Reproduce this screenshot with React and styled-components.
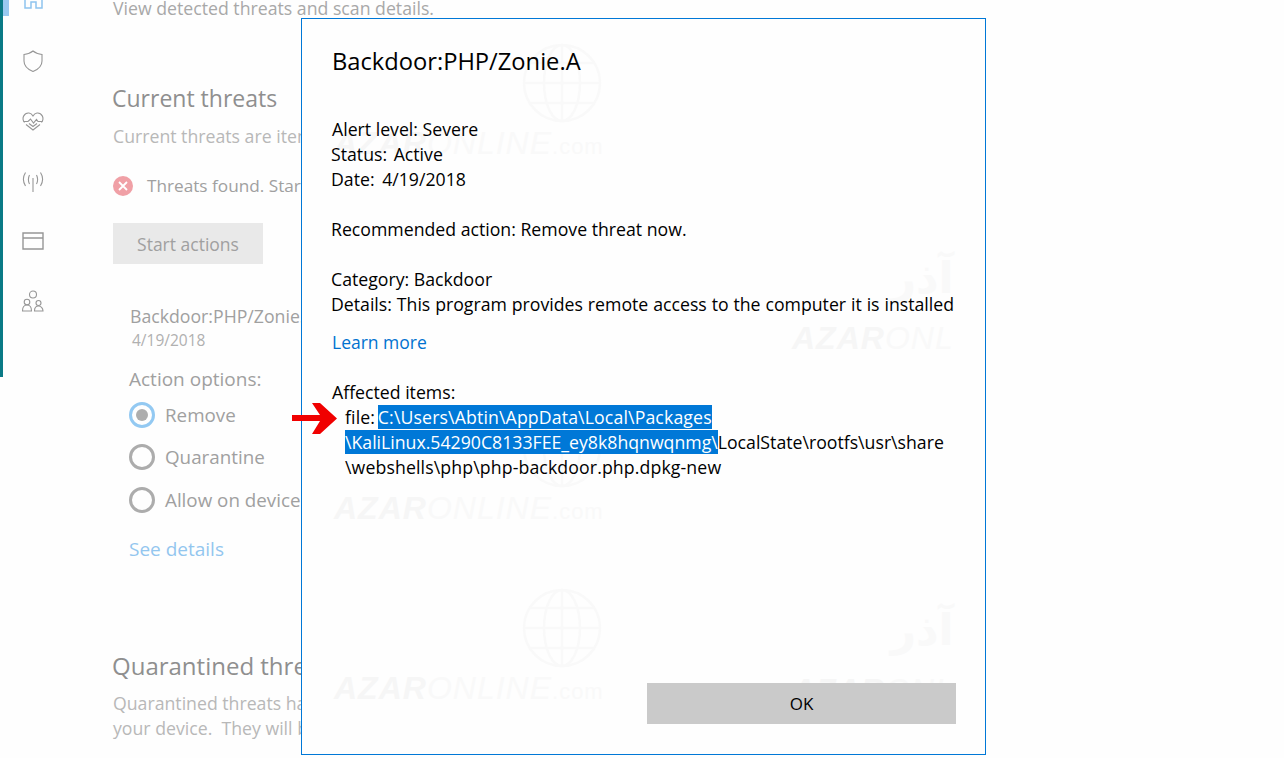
import React from "react";
import styled, { createGlobalStyle } from "styled-components";

const Global = createGlobalStyle`
  html, body {
    margin: 0;
    padding: 0;
    height: 100%;
    background: #fefefe;
    overflow: hidden;
  }
  body {
    font-family: "Open Sans", "Noto Sans", "Liberation Sans", sans-serif;
  }
`;

const Page = styled.div`
  display: flex;
  width: 1284px;
  height: 758px;
  overflow: hidden;
  position: relative;
`;

const Rail = styled.div`
  width: 3px;
  height: 377px;
  background: #0a7a86;
  flex: none;
`;

const Sidebar = styled.nav`
  width: 60px;
  flex: none;
  display: flex;
  flex-direction: column;
  align-items: center;
  position: relative;
  padding-top: 49px;
  margin-right: 50px;
  gap: 36px;
`;

const Selected = styled.div`
  position: absolute;
  left: 0;
  top: 0;
  width: 6px;
  height: 16px;
  background: #99c9f0;
`;

const HomeIcon = styled.svg`
  position: absolute;
  left: 20px;
  top: -8px;
`;

const Content = styled.main`
  flex: 1;
  min-width: 0;
`;

const Intro = styled.p`
  margin: -4px 0 0;
  font-size: 17.7px;
  line-height: 24px;
  color: #a8a8a8;
  white-space: nowrap;
`;

const SectionTitle = styled.h2`
  margin: ${(p) => p.$top}px 0 0 -1px;
  font-size: ${(p) => p.$size || 23}px;
  line-height: 32px;
  font-weight: 400;
  color: #8f8f8f;
  white-space: nowrap;
`;

const Note = styled.p`
  margin: ${(p) => p.$top}px 0 0;
  font-size: 17.7px;
  line-height: 25px;
  color: #b8b8b8;
  white-space: pre;
`;

const Status = styled.div`
  display: flex;
  align-items: center;
  gap: 14px;
  margin-top: 25px;
  font-size: 17.2px;
  line-height: 24px;
  color: #a0a0a0;
  white-space: nowrap;
`;

const ErrorDot = styled.span`
  width: 20px;
  height: 20px;
  flex: none;
  border-radius: 50%;
  background: #f0a0a6;
  display: flex;
  align-items: center;
  justify-content: center;
`;

const StartButton = styled.div`
  width: 150px;
  height: 41px;
  margin-top: 25px;
  background: #e9e9e9;
  color: #a0a0a0;
  font-size: 17.5px;
  display: flex;
  align-items: center;
  justify-content: center;
`;

const ThreatBlock = styled.div`
  margin: 40px 0 0 16px;
`;

const ThreatName = styled.div`
  margin-left: 1px;
  font-size: 17.7px;
  line-height: 24px;
  color: #a0a0a0;
  white-space: nowrap;
`;

const ThreatDate = styled.div`
  margin: 1px 0 0 3px;
  font-size: 15.5px;
  line-height: 22px;
  color: #b0b0b0;
`;

const OptionsLabel = styled.div`
  margin-top: 16px;
  font-size: 19px;
  line-height: 24px;
  color: #a0a0a0;
`;

const RadioRow = styled.div`
  display: flex;
  align-items: center;
  gap: 10px;
  height: 26px;
  margin-top: ${(p) => p.$top}px;
  font-size: 18.8px;
  color: #a0a0a0;
  white-space: nowrap;
`;

const Radio = styled.span`
  width: 26px;
  height: 26px;
  box-sizing: border-box;
  flex: none;
  border-radius: 50%;
  border: 3px solid ${(p) => (p.$on ? "#93c9f2" : "#acacac")};
  display: flex;
  align-items: center;
  justify-content: center;

  &::after {
    content: "";
    display: ${(p) => (p.$on ? "block" : "none")};
    width: 12px;
    height: 12px;
    border-radius: 50%;
    background: #adadad;
  }
`;

const SeeDetails = styled.div`
  margin-top: 23px;
  font-size: 19px;
  line-height: 26px;
  color: #93c6ef;
`;

const Dialog = styled.section`
  position: absolute;
  left: 301px;
  top: 18px;
  width: 685px;
  height: 737px;
  box-sizing: border-box;
  border: 1px solid #0078d7;
  background: #fefefe;
  color: #000;
  padding: 25px 30px 0;
  font-size: 17.7px;
  line-height: 25px;
  z-index: 2;
  overflow: hidden;
`;

const DialogBody = styled.div`
  position: relative;
  z-index: 1;
`;

const Title = styled.h1`
  margin: 0;
  font-size: 23.7px;
  line-height: 34px;
  font-weight: 400;
`;

const Group = styled.div`
  margin-top: ${(p) => p.$top}px;
  white-space: nowrap;
`;

const Field = styled.div`
  margin-left: ${(p) => (p.$flush ? 0 : -1)}px;
  word-spacing: ${(p) => p.$spread || 0}px;
`;

const LearnMore = styled.div`
  margin-top: 13px;
  color: #0072d0;
  font-size: 17.5px;
`;

const FilePath = styled.div`
  padding-left: 13px;
`;

const PathLine = styled.div`
  letter-spacing: ${(p) => p.$track || 0}px;
  word-spacing: ${(p) => p.$spread || 0}px;
`;

const Highlight = styled.span`
  background: #0078d7;
  color: #fff;
`;

const OkButton = styled.div`
  position: absolute;
  left: 345px;
  top: 664px;
  width: 309px;
  height: 41px;
  background: #cacaca;
  font-size: 17px;
  display: flex;
  align-items: center;
  justify-content: center;
  z-index: 1;
`;

const Arrow = styled.svg`
  position: absolute;
  left: 291px;
  top: 401px;
  z-index: 3;
`;

/* faint site watermark behind the dialog text */
const Tile = styled.div`
  position: absolute;
  left: ${(p) => p.$x}px;
  top: ${(p) => p.$y}px;
  color: #f9f9f9;
  pointer-events: none;
`;

const TileTop = styled.div`
  display: flex;
  align-items: center;
  justify-content: flex-end;
  gap: 24px;
  height: 88px;
`;

const TileFarsi = styled.span`
  font-family: "DejaVu Sans", sans-serif;
  font-size: 44px;
  font-weight: 700;
  line-height: 60px;
`;

const TileLatin = styled.div`
  font-family: "Liberation Sans", sans-serif;
  font-size: 32px;
  font-style: italic;
  line-height: 32px;
  letter-spacing: 1px;
  white-space: nowrap;

  b {
    font-weight: 700;
    color: #f6f6f6;
  }
  small {
    font-size: 22px;
    font-style: normal;
  }
`;

const Icon = ({ children }) => (
  <svg width="24" height="24" viewBox="0 0 24 24" fill="none" stroke="#969696" strokeWidth="1.1">
    {children}
  </svg>
);

const Globe = () => (
  <svg width="84" height="84" viewBox="0 0 84 84" fill="none" stroke="#f9f9f9" strokeWidth="2.500">
    <circle cx="42" cy="42" r="38" />
    <ellipse cx="42" cy="42" rx="18" ry="38" />
    <path d="M4 42h76M10 22h64M10 62h64M42 4v76" />
  </svg>
);

const Mark = ({ x, y, farsi, tail, children }) => (
  <Tile $x={x} $y={y}>
    <TileTop>
      {farsi ? <TileFarsi>{farsi}</TileFarsi> : <Globe />}
    </TileTop>
    <TileLatin>
      <b>AZAR</b>
      {children}
      {tail && <small>{tail}</small>}
    </TileLatin>
  </Tile>
);

export default function App() {
  return (
    <Page>
      <Global />
      <Rail />
      <Sidebar>
        <Selected />
        <HomeIcon width="22" height="18" viewBox="0 0 22 18" fill="none" stroke="#8fc4ee" strokeWidth="1.5">
          <path d="M2 6v10h6v-6h5v6h6V6" />
        </HomeIcon>
        <Icon>
          <path d="M12 2c2.500 2.200 5 3 9 3.500V12c0 5-4 8.500-9 10.500C7 20.500 3 17 3 12V5.500C7 5 9.500 4.200 12 2z" />
        </Icon>
        <Icon>
          <path d="M3.500 13.500C0 9 3.500 3.500 8 4c2 .2 3 1.300 4 3 1-1.700 2-2.800 4-3 4.500-.5 8 5 4.500 9.500" />
          <path d="M2.500 12.500H7l2.500-2.500 3 4 3-3.500 1.500 2h4.500" />
          <path d="M5 15.500l7 5.500 7-5.500M8 14.500l4 3 4-3" />
        </Icon>
        <Icon>
          <path d="M12 9v14" />
          <path d="M8.500 6c-1.500 3-1.500 6 0 9M15.500 6c1.500 3 1.500 6 0 9M4.500 3.500C2 7.500 2 13 4.500 17M19.500 3.500c2.500 4 2.500 9.500 0 13.500" />
        </Icon>
        <Icon>
          <path d="M2 4h20v16H2zM2 9h20" strokeWidth="1.400" />
        </Icon>
        <Icon>
          <circle cx="12" cy="5.500" r="3.500" />
          <circle cx="6" cy="13" r="2.800" />
          <circle cx="17.500" cy="14" r="2.500" />
          <path d="M1.500 22c0-4 2-6 4.500-6s4.500 2 4.500 6zM13.500 22c0-3 1.800-5 4-5s4.500 2 4.500 5z" />
        </Icon>
      </Sidebar>
      <Content>
        <Intro>View detected threats and scan details.</Intro>
        <SectionTitle $top={62}>Current threats</SectionTitle>
        <Note $top={10}>Current threats are items that need your attention.</Note>
        <Status>
          <ErrorDot>
            <svg width="10" height="10" viewBox="0 0 10 10" stroke="#fff" strokeWidth="1.8">
              <path d="M1 1l8 8M9 1l-8 8" />
            </svg>
          </ErrorDot>
          Threats found. Start the recommended actions.
        </Status>
        <StartButton>Start actions</StartButton>
        <ThreatBlock>
          <ThreatName>Backdoor:PHP/Zonie.A</ThreatName>
          <ThreatDate>4/19/2018</ThreatDate>
          <OptionsLabel>Action options:</OptionsLabel>
          <RadioRow $top={11}>
            <Radio $on />
            Remove
          </RadioRow>
          <RadioRow $top={16}>
            <Radio />
            Quarantine
          </RadioRow>
          <RadioRow $top={17}>
            <Radio />
            Allow on device
          </RadioRow>
          <SeeDetails>See details</SeeDetails>
        </ThreatBlock>
        <SectionTitle $top={88} $size={24}>Quarantined threats</SectionTitle>
        <Note $top={9}>Quarantined threats have been isolated from</Note>
        <Note $top={0}>your device.  They will be removed automatically.</Note>
      </Content>
      <Dialog>
        <Mark x={32} y={20} tail=".com">ONLINE</Mark>
        <Mark x={32} y={385} tail=".com">ONLINE</Mark>
        <Mark x={32} y={565} tail=".com">ONLINE</Mark>
        <Mark x={490} y={215} farsi="آذر">ONL</Mark>
        <Mark x={490} y={567} farsi="آذر">ONL</Mark>
        <DialogBody>
          <Title>Backdoor:PHP/Zonie.A</Title>
          <Group $top={39}>
            <Field $flush>Alert level: Severe</Field>
            <Field $spread={2}>Status: Active</Field>
            <Field $spread={3}>Date: 4/19/2018</Field>
          </Group>
          <Group $top={25}>
            <Field>Recommended action: Remove threat now.</Field>
          </Group>
          <Group $top={25}>
            <Field>Category: Backdoor</Field>
            <Field $spread={0.3}>Details: This program provides remote access to the computer it is installed</Field>
          </Group>
          <LearnMore>Learn more</LearnMore>
          <Group $top={25}>
            <Field $flush>Affected items:</Field>
            <FilePath>
              <PathLine $track={0.13} $spread={-2}>
                file: <Highlight>C:\Users\Abtin\AppData\Local\Packages</Highlight>
              </PathLine>
              <PathLine>
                <Highlight>\KaliLinux.54290C8133FEE_ey8k8hqnwqnmg\</Highlight>LocalState\rootfs\usr\share
              </PathLine>
              <PathLine $track={0.12}>\webshells\php\php-backdoor.php.dpkg-new</PathLine>
            </FilePath>
          </Group>
        </DialogBody>
        <OkButton>OK</OkButton>
      </Dialog>
      <Arrow width="50" height="34" viewBox="0 0 50 34">
        <path d="M1 14h28L21 2h8l17 15.500L29 33h-8l8-13H1z" fill="#f00000" />
      </Arrow>
    </Page>
  );
}
